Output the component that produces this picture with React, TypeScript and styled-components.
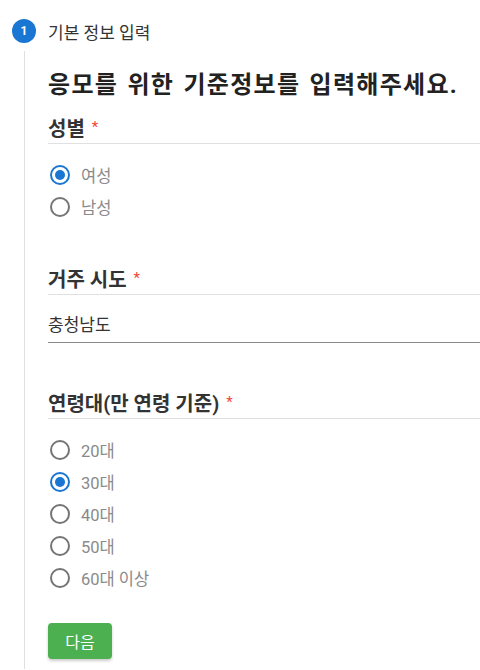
import styled, { createGlobalStyle } from "styled-components";

const GlobalStyle = createGlobalStyle`
  html, body {
    margin: 0;
    padding: 0;
    background: #fff;
  }
  body {
    font-family: Roboto, "Noto Sans CJK KR", sans-serif;
    color: #333;
    overflow: hidden;
  }
`;

const genders = ["여성", "남성"];
const ages = ["20대", "30대", "40대", "50대", "60대 이상"];

function Radio({ label, checked }: { label: string; checked?: boolean }) {
  return (
    <RadioRow>
      <RadioIcon viewBox="0 0 24 24" $checked={checked}>
        <circle cx="12" cy="12" r="9" fill="none" stroke="currentColor" strokeWidth="2" />
        {checked && <circle cx="12" cy="12" r="5" fill="currentColor" />}
      </RadioIcon>
      <RadioLabel>{label}</RadioLabel>
    </RadioRow>
  );
}

export default function App() {
  return (
    <>
      <GlobalStyle />
      <Stepper>
        <StepHeader>
          <StepIcon>1</StepIcon>
          <StepLabel>기본 정보 입력</StepLabel>
        </StepHeader>
        <StepContent>
          <Title>응모를 위한 기준정보를 입력해주세요.</Title>

          <FieldLabel $gap={14}>
            성별<Required>*</Required>
          </FieldLabel>
          <RadioGroup>
            {genders.map((g, i) => (
              <Radio key={g} label={g} checked={i === 0} />
            ))}
          </RadioGroup>

          <FieldLabel $gap={43}>
            거주 시도<Required>*</Required>
          </FieldLabel>
          <SelectBox>충청남도</SelectBox>

          <FieldLabel $gap={47}>
            연령대(만 연령 기준)<Required>*</Required>
          </FieldLabel>
          <RadioGroup>
            {ages.map((a, i) => (
              <Radio key={a} label={a} checked={i === 1} />
            ))}
          </RadioGroup>

          <NextButton>다음</NextButton>
        </StepContent>
      </Stepper>
    </>
  );
}

const Stepper = styled.div`
  padding: 19px 0 0 12px;
  width: 480px;
  box-sizing: border-box;
`;

const StepHeader = styled.div`
  display: flex;
  align-items: center;
  gap: 12px;
  height: 24px;
`;

const StepIcon = styled.div`
  width: 24px;
  height: 24px;
  border-radius: 50%;
  background: #1976d2;
  color: #fff;
  font-size: 12px;
  font-weight: 700;
  display: flex;
  align-items: center;
  justify-content: center;
`;

const StepLabel = styled.div`
  font-size: 17px;
  color: #333;
`;

const StepContent = styled.div`
  margin: 8px 0 0 12px;
  border-left: 1px solid #e0e0e0;
  padding: 18px 0 10px 23px;
`;

const Title = styled.h2`
  margin: 0;
  height: 32px;
  font-size: 24px;
  line-height: 32px;
  font-weight: 700;
  letter-spacing: 1.3px;
  word-spacing: 2px;
  color: #222;
  white-space: nowrap;
`;

const FieldLabel = styled.div<{ $gap: number }>`
  margin-top: ${(p) => p.$gap}px;
  display: flex;
  align-items: center;
  height: 24px;
  font-size: 20px;
  font-weight: 700;
  color: #333;
  padding-bottom: 4px;
  border-bottom: 1px solid #e0e0e0;
  white-space: nowrap;
`;

const Required = styled.span`
  color: #f44336;
  font-size: 15px;
  font-weight: 400;
  margin-left: 7px;
`;

const RadioGroup = styled.div`
  margin-top: 15px;
  display: flex;
  flex-direction: column;
`;

const RadioRow = styled.label`
  display: flex;
  align-items: center;
  height: 32px;
`;

const RadioIcon = styled.svg<{ $checked?: boolean }>`
  width: 24px;
  height: 24px;
  color: ${(p) => (p.$checked ? "#1976d2" : "#757575")};
`;

const RadioLabel = styled.span`
  margin-left: 9px;
  font-size: 16.5px;
  color: #8a8a8a;
`;

const SelectBox = styled.div`
  margin-top: 12px;
  height: 24px;
  padding: 6px 0 5px;
  font-size: 17px;
  line-height: 24px;
  color: #333;
  border-bottom: 1px solid #8a8a8a;
`;

const NextButton = styled.button`
  margin-top: 29px;
  width: 64px;
  height: 36px;
  border: none;
  border-radius: 4px;
  background: #4caf50;
  color: #fff;
  font-family: inherit;
  font-size: 16px;
  box-shadow: 0 2px 3px rgba(0, 0, 0, 0.2);
`;
